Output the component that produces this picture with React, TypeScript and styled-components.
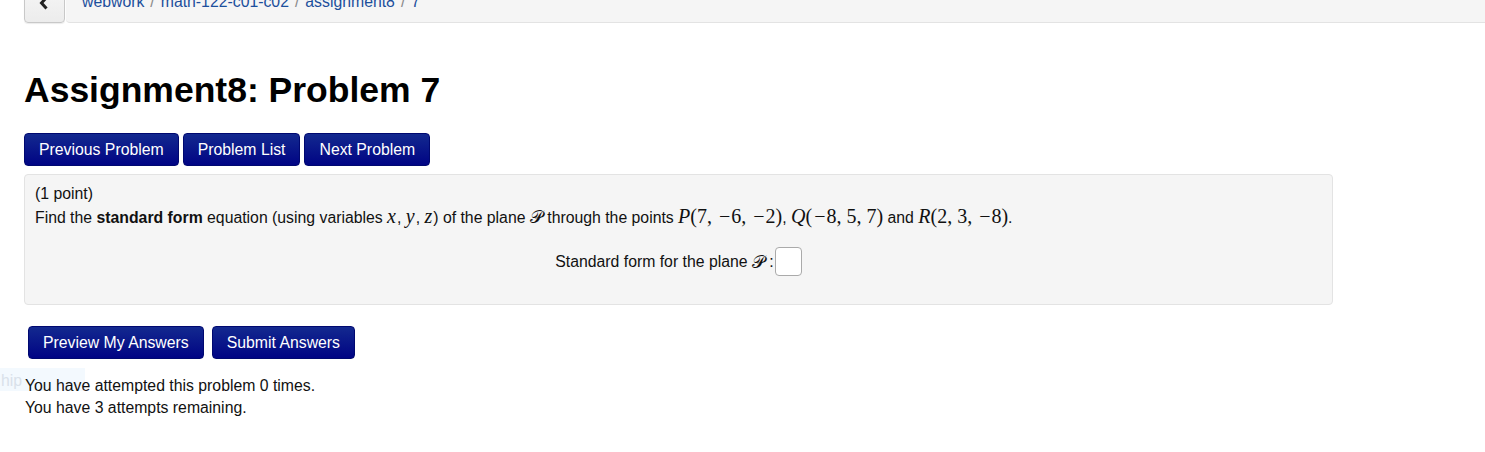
import styled, { createGlobalStyle } from 'styled-components'

const GlobalStyle = createGlobalStyle`
  body {
    margin: 0;
    background: #fff;
    color: #111;
    font-family: "Liberation Sans", Arial, sans-serif;
    font-size: 15.8px;
    line-height: 22px;
    overflow: hidden;
  }
`

const Page = styled.div`
  position: relative;
  padding: 0 0 0 24px;
`

const TopNav = styled.div`
  display: flex;
  height: 40px;
  margin-top: -17px;
`

const BackButton = styled.button`
  width: 41px;
  height: 40px;
  display: flex;
  align-items: center;
  justify-content: center;
  padding: 0 2px 0 0;
  background: linear-gradient(#f7f7f7, #ececec);
  border: 1px solid #c8c8c8;
  border-radius: 0 0 4px 4px;
  box-shadow: 0 1px 1px rgba(0, 0, 0, 0.08);
  cursor: pointer;
`

const Breadcrumb = styled.ul`
  flex: 1;
  display: flex;
  margin: 0 0 0 1px;
  padding: 8px 16px;
  list-style: none;
  background: #f5f5f5;
  border-bottom: 1px solid #e3e3e3;
  border-radius: 0 0 0 4px;
`

const Crumb = styled.li`
  color: #1c4f9c;
`

const Divider = styled.span`
  padding: 0 6px;
  color: #8a8a8a;
`

const Title = styled.h1`
  margin: 47px 0 23px;
  font-size: 35.5px;
  line-height: 40px;
  font-weight: bold;
  color: #000;
`

const ButtonRow = styled.div<{ $gap: number; $indent?: number }>`
  display: flex;
  gap: ${p => p.$gap}px;
  margin-left: ${p => p.$indent ?? 0}px;
`

const NavButton = styled.button`
  height: 33px;
  padding: 0 14px;
  font-family: "Liberation Sans", Arial, sans-serif;
  font-size: 15.8px;
  color: #fff;
  background: linear-gradient(#13298f, #000484);
  border: 1px solid #000870;
  border-radius: 4px;
  cursor: pointer;
`

const ProblemBox = styled.div`
  max-width: 1287px;
  margin-top: 8px;
  padding: 8px 10px 28px;
  background: #f5f5f5;
  border: 1px solid #e3e3e3;
  border-radius: 4px;
`

const Line = styled.div<{ $lh?: number }>`
  line-height: ${p => p.$lh ?? 22}px;
`

const Math = styled.span`
  font-family: "Liberation Serif", "Times New Roman", serif;
  font-size: 20px;
`

const Var = styled.i`
  font-family: "Liberation Serif", "Times New Roman", serif;
  font-style: italic;
  font-size: 20px;
  padding-right: 1px;
`

const Cal = styled.span`
  font-family: "DejaVu Serif", "Liberation Serif", serif;
  font-size: 18px;
`

const Sep = styled.span`
  margin-right: 5px;
`

const Minus = styled.span`
  padding: 0 1px 0 2px;
`

const AnswerLine = styled.div`
  display: flex;
  justify-content: center;
  align-items: center;
  margin-top: 18px;
  height: 29px;
`

const AnswerInput = styled.input`
  width: 27px;
  height: 29px;
  box-sizing: border-box;
  margin: 0 0 0 1px;
  border: 1px solid #aaa;
  border-radius: 4px;
  background: #fff;
`

const AnswerForm = styled.div`
  margin-top: 21px;
`

const AttemptsWrap = styled.div`
  position: relative;
  margin-left: -24px;
  padding-left: 25px;
`

const SkipHint = styled.div`
  position: absolute;
  left: 0;
  top: -7px;
  width: 85px;
  height: 23px;
  padding-left: 1px;
  box-sizing: border-box;
  background: #f3f9fe;
  color: #d9e1ea;
  line-height: 26px;
  overflow: hidden;
`

const Attempts = styled.div`
  position: relative;
  margin-top: 16px;
`

const Point = ({ name, coords }: { name: string; coords: string[] }) => (
  <Math>
    <i>{name}</i>(
    {coords.map((c, i) => (
      <span key={i}>
        {c.startsWith('−') ? (
          <>
            <Minus>−</Minus>
            {c.slice(1)}
          </>
        ) : (
          c
        )}
        {i < coords.length - 1 && <Sep>,</Sep>}
      </span>
    ))}
    )
  </Math>
)

const App = () => {
  return (
    <Page>
      <GlobalStyle />
      <TopNav>
        <BackButton aria-label="back">
          <svg width="10" height="14" viewBox="0 0 10 14">
            <polyline points="7.5,1.5 2.5,7 7.5,12.5" fill="none" stroke="#222" strokeWidth="3" />
          </svg>
        </BackButton>
        <Breadcrumb>
          <Crumb>webwork</Crumb>
          <Divider>/</Divider>
          <Crumb>math-122-c01-c02</Crumb>
          <Divider>/</Divider>
          <Crumb>assignment8</Crumb>
          <Divider>/</Divider>
          <Crumb>7</Crumb>
        </Breadcrumb>
      </TopNav>

      <Title>Assignment8: Problem 7</Title>

      <ButtonRow $gap={4}>
        <NavButton>Previous Problem</NavButton>
        <NavButton>Problem List</NavButton>
        <NavButton>Next Problem</NavButton>
      </ButtonRow>

      <ProblemBox>
        <Line>(1 point)</Line>
        <Line $lh={23}>
          Find the <b>standard form</b> equation (using variables <Var>x</Var>, <Var>y</Var>,{' '}
          <Var>z</Var>) of the plane <Cal>𝒫</Cal> through the points{' '}
          <Point name="P" coords={['7', '−6', '−2']} />,{' '}
          <Point name="Q" coords={['−8', '5', '7']} /> and{' '}
          <Point name="R" coords={['2', '3', '−8']} />.
        </Line>
        <AnswerLine>
          Standard form for the plane&nbsp;<Cal>𝒫</Cal>&nbsp;:
          <AnswerInput type="text" />
        </AnswerLine>
      </ProblemBox>

      <AnswerForm>
        <ButtonRow $gap={8} $indent={4}>
          <NavButton>Preview My Answers</NavButton>
          <NavButton>Submit Answers</NavButton>
        </ButtonRow>
      </AnswerForm>

      <AttemptsWrap>
        <SkipHint>hip</SkipHint>
        <Attempts>
          You have attempted this problem 0 times.
          <br />
          You have 3 attempts remaining.
        </Attempts>
      </AttemptsWrap>
    </Page>
  )
}

export default App
